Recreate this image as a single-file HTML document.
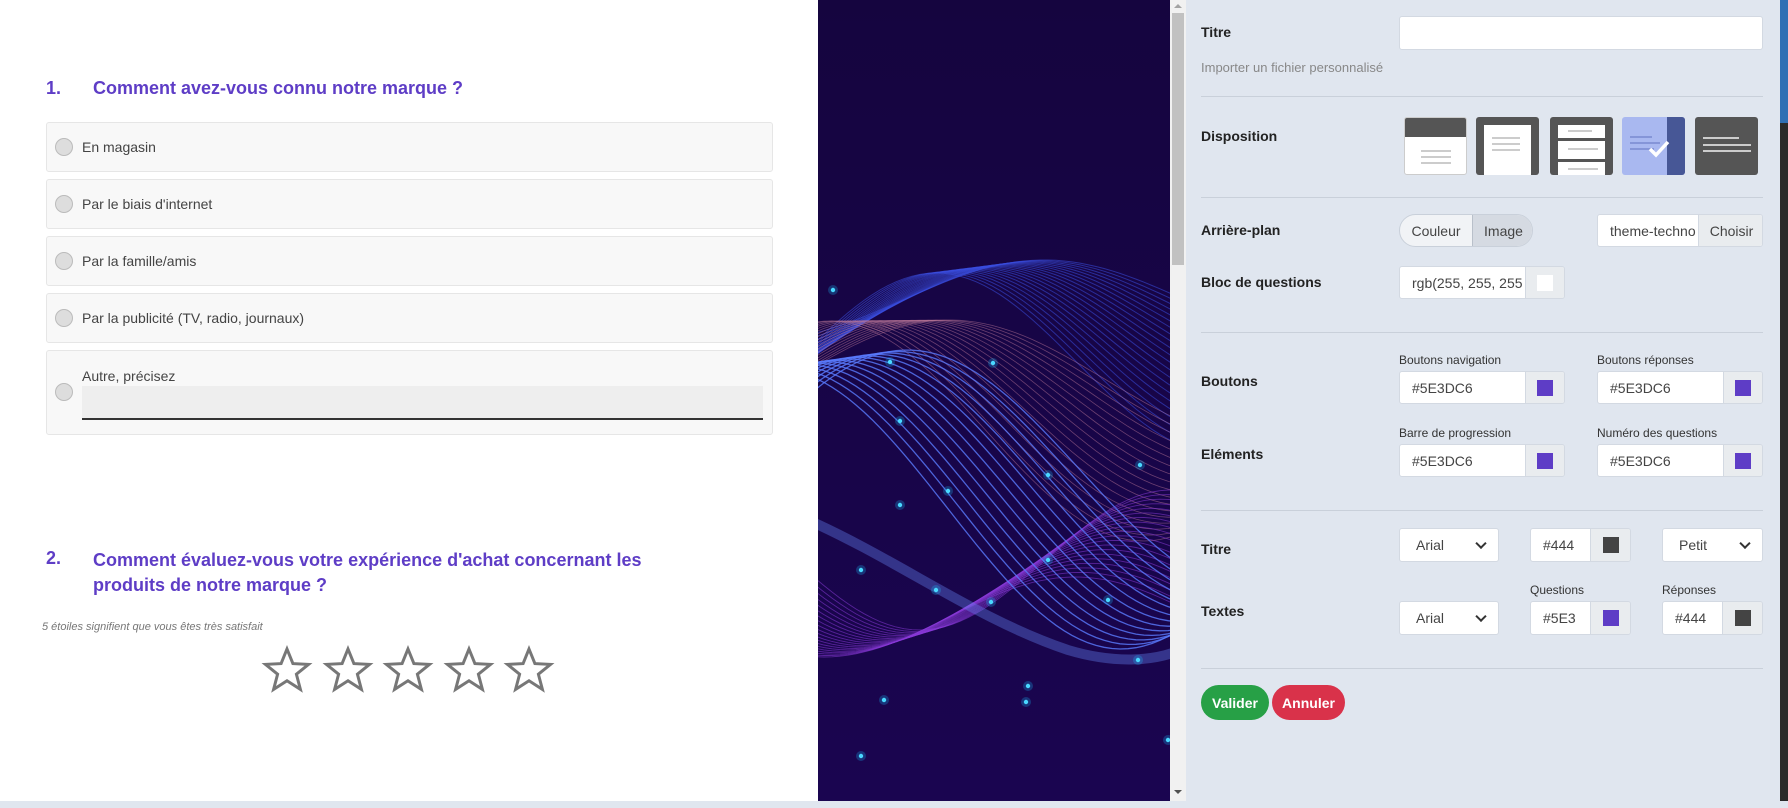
<!DOCTYPE html>
<html><head><meta charset="utf-8">
<style>
*{box-sizing:border-box;margin:0;padding:0}
body{width:1788px;height:808px;overflow:hidden;background:#e0e6ef;font-family:"Liberation Sans",sans-serif;position:relative}
.a{position:absolute}
.left{left:0;top:0;width:818px;height:801px;background:#fff}
.qt{color:#5E3DC6;font-weight:bold;font-size:18px}
.opt{left:46px;width:727px;height:50px;background:#f8f8f8;border:1px solid #e6e6e6;border-radius:3px}
.rad{width:18px;height:18px;border-radius:50%;background:#ddd;border:1px solid #bbb;left:8px}
.ot{left:35px;font-size:14px;color:#444}
.lab{left:1201px;font-size:14px;font-weight:bold;color:#222;line-height:16px;font-family:"Liberation Sans Narrow","Liberation Sans",sans-serif}
.sm{font-size:12px;color:#333;line-height:14px;font-family:"Liberation Sans Narrow","Liberation Sans",sans-serif}
.inp{background:#fff;border:1px solid #d3d9e2;border-radius:3px;font-size:14px;color:#444;font-family:"Liberation Sans Narrow","Liberation Sans",sans-serif;display:flex;align-items:center;padding-left:12px;overflow:hidden;white-space:nowrap}
.sw{position:absolute;top:-1px;bottom:-1px;right:-1px;background:#e9ecef;border:1px solid #d3d9e2;border-radius:0 3px 3px 0;display:flex;align-items:center;justify-content:center}
.sw i{display:block;width:16px;height:16px}
.hr{left:1201px;width:562px;height:1px;background:#c9d0da}
.tile{width:63px;height:58px;border-radius:3px;overflow:hidden;background:#555;top:117px}
.ln{position:absolute;height:2px;background:#ccc}
.sel{background:#fff;border:1px solid #d3d9e2;border-radius:3px;font-size:14px;color:#444;display:flex;align-items:center;padding-left:16px;font-family:"Liberation Sans Narrow","Liberation Sans",sans-serif}
.sel:after{content:"";position:absolute;right:13px;top:50%;width:6px;height:6px;border-right:2px solid #333;border-bottom:2px solid #333;transform:translateY(-70%) rotate(45deg)}
.btn{top:685px;height:35px;border-radius:18px;color:#fff;font-size:14px;font-weight:bold;display:flex;align-items:center;justify-content:center;font-family:"Liberation Sans Narrow","Liberation Sans",sans-serif}
</style></head><body>
<div class="a left">
 <div class="a qt" style="left:46px;top:78px">1.</div>
 <div class="a qt" style="left:93px;top:78px">Comment avez-vous connu notre marque ?</div>

 <div class="a opt" style="top:122px"><div class="a rad" style="top:15px"></div><div class="a ot" style="top:16px">En magasin</div></div>
 <div class="a opt" style="top:179px"><div class="a rad" style="top:15px"></div><div class="a ot" style="top:16px">Par le biais d'internet</div></div>
 <div class="a opt" style="top:236px"><div class="a rad" style="top:15px"></div><div class="a ot" style="top:16px">Par la famille/amis</div></div>
 <div class="a opt" style="top:293px"><div class="a rad" style="top:15px"></div><div class="a ot" style="top:16px">Par la publicité (TV, radio, journaux)</div></div>
 <div class="a opt" style="top:350px;height:85px"><div class="a rad" style="top:32px"></div><div class="a ot" style="top:17px">Autre, précisez</div>
  <div class="a" style="left:35px;top:35px;width:681px;height:34px;background:#eee;border-bottom:2px solid #333"></div></div>

 <div class="a qt" style="left:46px;top:548px">2.</div>
 <div class="a qt" style="left:93px;top:548px;width:580px;line-height:25px">Comment évaluez-vous votre expérience d'achat concernant les produits de notre marque ?</div>
 <div class="a" style="left:42px;top:621px;font-size:11px;font-style:italic;color:#777">5 étoiles signifient que vous êtes très satisfait</div>
 <svg class="a" style="left:260px;top:645px" width="300" height="52" viewBox="0 0 300 52">
  <g fill="none" stroke="#777" stroke-width="3" stroke-linejoin="miter">
   <path id="st" d="M27 4 L32.9 18.6 L48.5 19.4 L36.4 29.2 L40.4 44.4 L27 35.8 L13.6 44.4 L17.6 29.2 L5.5 19.4 L21.1 18.6 Z"/>
   <use href="#st" x="61"/><use href="#st" x="121"/><use href="#st" x="182"/><use href="#st" x="242"/>
  </g>
 </svg>
</div>

<svg class="a" style="left:818px;top:0" width="352" height="801" viewBox="0 0 352 801" id="wv">
 <defs><linearGradient id="bg" x1="0" y1="0" x2="0" y2="1"><stop offset="0" stop-color="#15053f"/><stop offset="1" stop-color="#1a0550"/></linearGradient></defs>
 <rect width="352" height="801" fill="url(#bg)"/>
</svg>

<div class="a" style="left:1170px;top:0;width:16px;height:801px;background:#f1f1f1"></div>
<div class="a" style="left:1172px;top:13px;width:12px;height:252px;background:#c1c1c1"></div>
<div class="a" style="left:1174px;top:4px;width:0;height:0;border-left:4px solid transparent;border-right:4px solid transparent;border-bottom:4px solid #a3a3a3"></div>
<div class="a" style="left:1174px;top:790px;width:0;height:0;border-left:4px solid transparent;border-right:4px solid transparent;border-top:4px solid #505050"></div>
<div class="a" style="left:1780px;top:0;width:8px;height:801px;background:#2a2a2a"></div>
<div class="a" style="left:1780px;top:0;width:8px;height:123px;background:#2f6fb4"></div>
<div class="a" style="left:0;top:801px;width:1788px;height:7px;background:#e0e6ef"></div>

<div class="a lab" style="top:24px">Titre</div>
<div class="a inp" style="left:1399px;top:16px;width:364px;height:34px"></div>
<div class="a" style="left:1201px;top:60px;font-size:13px;color:#888;font-family:'Liberation Sans Narrow','Liberation Sans',sans-serif">Importer un fichier personnalisé</div>
<div class="a hr" style="top:96px"></div>

<div class="a lab" style="top:128px">Disposition</div>
<div class="a tile" style="left:1404px;background:#fff;border:1px solid #ccc"><div class="a" style="left:0;top:0;width:63px;height:19px;background:#555"></div><div class="ln" style="left:16px;top:32px;width:30px"></div><div class="ln" style="left:16px;top:38px;width:30px"></div><div class="ln" style="left:16px;top:44px;width:30px"></div></div>
<div class="a tile" style="left:1476px"><div class="a" style="left:8px;top:8px;width:47px;height:50px;background:#fff"></div><div class="ln" style="left:16px;top:20px;width:28px"></div><div class="ln" style="left:16px;top:26px;width:28px"></div><div class="ln" style="left:16px;top:32px;width:28px"></div></div>
<div class="a tile" style="left:1550px"><div class="a" style="left:8px;top:8px;width:47px;height:13px;background:#fff"></div><div class="a" style="left:8px;top:24px;width:47px;height:18px;background:#fff"></div><div class="a" style="left:8px;top:45px;width:47px;height:13px;background:#fff"></div><div class="ln" style="left:18px;top:13px;width:24px"></div><div class="ln" style="left:18px;top:31px;width:30px"></div><div class="ln" style="left:18px;top:51px;width:30px"></div></div>
<div class="a tile" style="left:1622px;background:#a9b8f0"><div class="a" style="left:45px;top:0;width:19px;height:58px;background:#475796"></div><div class="ln" style="left:8px;top:19px;width:22px;background:#8595d8"></div><div class="ln" style="left:8px;top:25px;width:30px;background:#8595d8"></div><div class="ln" style="left:8px;top:31px;width:24px;background:#8595d8"></div>
 <svg class="a" style="left:26px;top:22px" width="22" height="20"><path d="M2 10 L8 16 L20 3" stroke="#fff" stroke-width="3.5" fill="none"/></svg></div>
<div class="a tile" style="left:1695px"><div class="ln" style="left:8px;top:20px;width:36px"></div><div class="ln" style="left:8px;top:27px;width:48px"></div><div class="ln" style="left:8px;top:33px;width:48px"></div></div>
<div class="a hr" style="top:197px"></div>

<div class="a lab" style="top:222px">Arrière-plan</div>
<div class="a" style="left:1399px;top:214px;width:134px;height:33px;border:1px solid #c9d0da;border-radius:17px;overflow:hidden;background:#f1f3f6;font-size:14px;color:#444;font-family:'Liberation Sans Narrow','Liberation Sans',sans-serif">
 <div class="a" style="left:0;top:0;width:72px;height:31px;display:flex;align-items:center;justify-content:center">Couleur</div>
 <div class="a" style="left:72px;top:0;width:62px;height:31px;background:#d5dae2;border-left:1px solid #b9c0ca;display:flex;align-items:center;justify-content:center">Image</div></div>
<div class="a inp" style="left:1597px;top:214px;width:166px;height:33px">theme-techno<div class="sw" style="left:100px;width:67px;color:#444">Choisir</div></div>

<div class="a lab" style="top:274px">Bloc de questions</div>
<div class="a inp" style="left:1399px;top:266px;width:166px;height:33px">rgb(255, 255, 255<div class="sw" style="left:125px"><i style="background:#fff"></i></div></div>
<div class="a hr" style="top:332px"></div>

<div class="a sm" style="left:1399px;top:353px">Boutons navigation</div>
<div class="a sm" style="left:1597px;top:353px">Boutons réponses</div>
<div class="a lab" style="top:373px">Boutons</div>
<div class="a inp" style="left:1399px;top:371px;width:166px;height:33px">#5E3DC6<div class="sw" style="left:125px"><i style="background:#5E3DC6"></i></div></div>
<div class="a inp" style="left:1597px;top:371px;width:166px;height:33px">#5E3DC6<div class="sw" style="left:125px"><i style="background:#5E3DC6"></i></div></div>

<div class="a sm" style="left:1399px;top:426px">Barre de progression</div>
<div class="a sm" style="left:1597px;top:426px">Numéro des questions</div>
<div class="a lab" style="top:446px">Eléments</div>
<div class="a inp" style="left:1399px;top:444px;width:166px;height:33px">#5E3DC6<div class="sw" style="left:125px"><i style="background:#5E3DC6"></i></div></div>
<div class="a inp" style="left:1597px;top:444px;width:166px;height:33px">#5E3DC6<div class="sw" style="left:125px"><i style="background:#5E3DC6"></i></div></div>
<div class="a hr" style="top:510px"></div>

<div class="a lab" style="top:541px">Titre</div>
<div class="a sel" style="left:1399px;top:528px;width:100px;height:34px">Arial</div>
<div class="a inp" style="left:1530px;top:528px;width:101px;height:34px">#444<div class="sw" style="left:59px"><i style="background:#444"></i></div></div>
<div class="a sel" style="left:1662px;top:528px;width:101px;height:34px">Petit</div>

<div class="a sm" style="left:1530px;top:583px">Questions</div>
<div class="a sm" style="left:1662px;top:583px">Réponses</div>
<div class="a lab" style="top:603px">Textes</div>
<div class="a sel" style="left:1399px;top:601px;width:100px;height:34px">Arial</div>
<div class="a inp" style="left:1530px;top:601px;width:101px;height:34px">#5E3<div class="sw" style="left:59px"><i style="background:#5E3DC6"></i></div></div>
<div class="a inp" style="left:1662px;top:601px;width:101px;height:34px">#444<div class="sw" style="left:59px"><i style="background:#444"></i></div></div>
<div class="a hr" style="top:668px"></div>

<div class="a btn" style="left:1201px;width:68px;background:#27a046">Valider</div>
<div class="a btn" style="left:1272px;width:73px;background:#d9324a">Annuler</div>

<script>
(function(){
 var s=document.getElementById('wv'),h='';
 function wave(n,y0,a0,a1,ph,f,col,op,w){
  for(var i=0;i<n;i++){var t=i/(n-1),d='';
   for(var x=-10;x<=362;x+=8){var y=y0+i*3+(a0+(a1-a0)*t)*Math.sin(x/f+ph+t*1.2);d+=(x==-10?'M':'L')+x+' '+y.toFixed(1);}
   h+='<path d="'+d+'" fill="none" stroke="'+col+'" stroke-opacity="'+op+'" stroke-width="'+w+'"/>';}
 }
 wave(22,300,40,90,2.2,90,'#3a4ee0',0.55,1);
 wave(18,380,60,110,3.4,100,'#c07a9a',0.5,0.8);
 wave(20,560,70,40,0.3,80,'#8a3bd8',0.55,0.9);
 wave(14,470,120,140,3.9,110,'#5a7cff',0.8,1.3);
 h+='<path d="M-10 520 C80 560 160 620 250 650 C300 665 340 660 362 650" stroke="#6a8cff" stroke-width="10" fill="none" opacity="0.35"/>';
 var dots=[[15,290],[72,362],[82,421],[130,491],[82,505],[175,363],[230,475],[322,465],[43,570],[118,590],[230,560],[290,600],[320,660],[66,700],[210,686],[43,756],[350,740],[173,602],[208,702]];
 dots.forEach(function(p){h+='<circle cx="'+p[0]+'" cy="'+p[1]+'" r="5" fill="#19c2ff" opacity="0.25"/><circle cx="'+p[0]+'" cy="'+p[1]+'" r="2.2" fill="#4ad8ff"/>';});
 s.insertAdjacentHTML('beforeend',h);
})();
</script>
</body></html>
